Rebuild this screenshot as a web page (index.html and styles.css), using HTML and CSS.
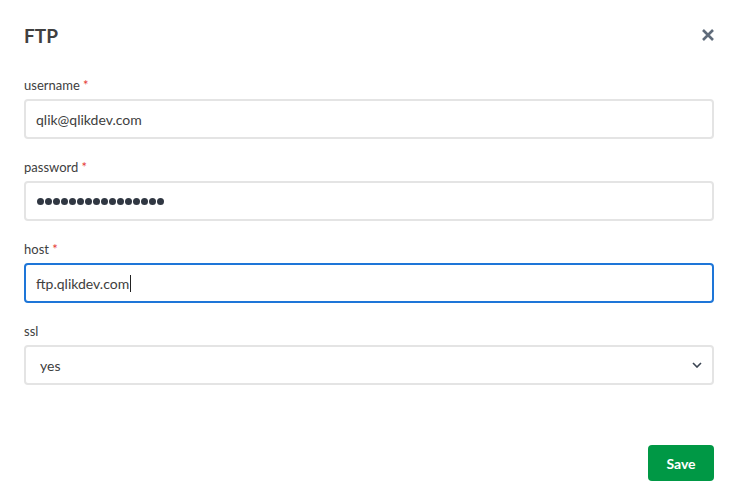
FILE: index.html
```html
<!DOCTYPE html>
<html>
<head>
<meta charset="utf-8">
<link rel="stylesheet" href="styles.css">
</head>
<body>
<div class="modal">
  <div class="header">
    <h1 class="title">FTP</h1>
    <button class="close" aria-label="Close">
      <svg width="14" height="14" viewBox="0 0 14 14"><path d="M2 2 L12 12 M12 2 L2 12" stroke="#5f6b7a" stroke-width="2.6" stroke-linecap="butt"/></svg>
    </button>
  </div>
  <form class="form">
    <div class="field">
      <label class="label">username <span class="req">*</span></label>
      <div class="input">qlik@qlikdev.com</div>
    </div>
    <div class="field">
      <label class="label">password <span class="req">*</span></label>
      <div class="input dots" aria-label="password">
        <i></i><i></i><i></i><i></i><i></i><i></i><i></i><i></i><i></i><i></i><i></i><i></i><i></i><i></i><i></i><i></i>
      </div>
    </div>
    <div class="field">
      <label class="label">host <span class="req">*</span></label>
      <div class="input focus">ftp.qlikdev.com<span class="caret"></span></div>
    </div>
    <div class="field">
      <label class="label">ssl</label>
      <div class="input select"><span class="sel-text">yes</span>
        <svg class="chev" width="10" height="6" viewBox="0 0 10 6"><path d="M1 1 L5 5 L9 1" fill="none" stroke="#3a4452" stroke-width="1.6"/></svg>
      </div>
    </div>
  </form>
  <div class="footer">
    <button class="save">Save</button>
  </div>
</div>
</body>
</html>
```
FILE: styles.css
```css
html, body { margin: 0; padding: 0; background: #fff; }
body { font-family: "Source Sans Pro", "Lato", "Noto Sans", sans-serif; color: #404040; }
.modal { width: 738px; height: 503px; box-sizing: border-box; padding: 0 24px; display: flex; flex-direction: column; }
.header { height: 70px; display: flex; align-items: center; justify-content: space-between; }
.title { margin: 0; font-size: 19px; font-weight: 700; color: #404040; }
.close { border: 0; background: none; padding: 0; margin-right: -1px; display: flex; }
.form { display: flex; flex-direction: column; gap: 19px; padding-top: 6px; }
.field { display: flex; flex-direction: column; }
.label { font-size: 13px; line-height: 18px; color: #404040; margin-bottom: 5px; }
.req { color: #e53935; }
.input { height: 40px; box-sizing: border-box; border: 2px solid #e4e4e4; border-radius: 4px; padding: 0 10px; display: flex; align-items: center; font-size: 14px; color: #404040; }
.dots { gap: 1px; padding-left: 11px; }
.dots i { display: block; width: 7px; height: 7px; border-radius: 50%; background: #303742; }
.focus { border-color: #1e76d8; }
.caret { display: inline-block; width: 1px; height: 17px; background: #222; margin-left: 1px; }
.select { justify-content: space-between; padding-left: 14px; padding-right: 10px; }
.footer { margin-top: auto; display: flex; justify-content: flex-end; padding-bottom: 22px; }
.save { background: #009845; color: #fff; border: 0; border-radius: 4px; width: 66px; height: 36px; font-family: inherit; font-size: 14px; font-weight: 700; }
```
